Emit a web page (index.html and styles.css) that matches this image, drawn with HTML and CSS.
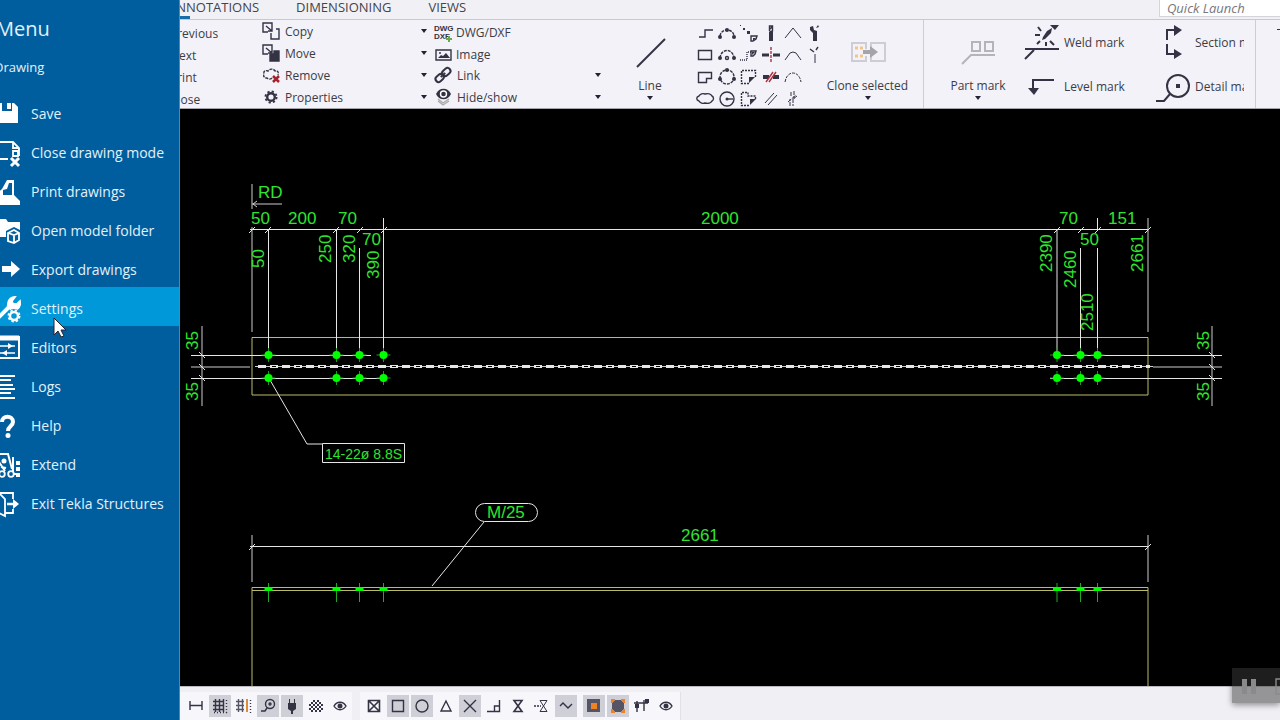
FILE: index.html
```html
<!DOCTYPE html>
<html lang="en">
<head>
    <meta charset="UTF-8">
    <title>Tekla Structures</title>
    <link rel="stylesheet" href="styles.css">
</head>
<body>

<!-- file menu -->
<aside class="menu">
    <h1>Menu</h1>
    <h2>Drawing</h2>
    <ul>
        <li><button><svg class="mi" viewBox="0 0 24 24"><path fill="#fff" stroke="none" d="M0 1h6v8h10V1h2l4 4v16H0zM11 1h4v6h-4z"/></svg>Save</button></li>
        <li><button><svg class="mi" viewBox="0 0 24 24"><path d="M0 18h12M0 1h17l6 6v8M17 1v6h6"/><path d="M17 10h5v5h-5z"/><path stroke-width="3" d="M15 17l8 8M23 17l-8 8"/></svg>Close drawing mode</button></li>
        <li><button><svg class="mi" viewBox="0 0 24 24"><path fill="#fff" stroke="none" fill-rule="evenodd" d="M0 14l6-5 5-9h7v15l6 6v4H0zM13 3h3v12H7v-5l4-1z"/></svg>Print drawings</button></li>
        <li><button><svg class="mi" viewBox="0 0 24 24"><path fill="#fff" stroke="none" d="M0 0h10l2 3h12v8l-6-3-8 4v6H0z"/><path d="M18 11l5 3v7l-5 3-6-2v-8zM12 14l6 2 5-2M18 16v7"/></svg>Open model folder</button></li>
        <li><button><svg class="mi" viewBox="0 0 24 24"><path fill="#fff" stroke="none" d="M6 8h9V3l9 8-9 8v-5H6z"/></svg>Export drawings</button></li>
        <li class="active"><button><svg class="mi" viewBox="0 0 24 24"><path stroke-width="4" d="M1 22L15 8"/><path fill="#fff" d="M19 0l-3 4 1 3 4 0 3-3c1 5-2 9-6 9-5 0-7-4-6-7 1-4 4-6 7-6z"/><circle cx="18" cy="19" r="7" fill="#0098d8" stroke="none"/><circle cx="18" cy="19" r="4" stroke-width="2.5"/><circle cx="18" cy="19" r="5.7" stroke-width="1.6" stroke-dasharray="2.4 2.08"/></svg>Settings</button></li>
        <li><button><svg class="mi" viewBox="0 0 24 24"><path d="M0 1h23v21H0" stroke-width="2"/><path d="M0 2h23" stroke-width="5"/><path d="M0 10h19M0 17h19" stroke-width="1.6"/><path d="M12 7l5 3-5 3zM11 14l-5 3 5 3z" fill="#fff" stroke="none"/></svg>Editors</button></li>
        <li><button><svg class="mi" viewBox="0 0 24 24"><path d="M0 1h19M0 5h15M0 10h17M0 14h19M0 18h15M0 23h19"/></svg>Logs</button></li>
        <li><button><svg class="mi" viewBox="0 0 24 24"><path stroke-width="4" d="M6 8c0-7 11-7 11 0 0 4-5 4-5 9"/><circle cx="12" cy="21.500" r="2.500" fill="#fff" stroke="none"/></svg>Help</button></li>
        <li><button><svg class="mi" viewBox="0 0 24 24"><path d="M3 1h9l4 15M3 1v8l6 9M17 4v17h3M5 14l5 1" stroke-width="2"/><circle cx="8" cy="8" r="2.500" fill="#fff" stroke="none"/><circle cx="6" cy="21" r="2.800"/><circle cx="15" cy="21" r="2.800" fill="#005e9e"/><path d="M20 8h4v4h-4zM20 14h4v4h-4zM20 20h4v4h-4z" fill="#fff" stroke="none"/></svg>Extend</button></li>
        <li><button><svg class="mi" viewBox="0 0 24 24"><path d="M0 1h17v6M17 17v4H9M9 7v17l-6-3V1z"/><path d="M11 12h8" stroke-width="2.500"/><path d="M17 7l6 5-6 5z" fill="#fff" stroke="none"/></svg>Exit Tekla Structures</button></li>
    </ul>
</aside>

<main>
    <header class="tabs">
        <nav>
            <a class="tab tab-first" href="#">ANNOTATIONS</a>
            <a class="tab" href="#">DIMENSIONING</a>
            <a class="tab" href="#">VIEWS</a>
        </nav>
        <input class="quick" type="text" placeholder="Quick Launch" aria-label="Quick Launch">
    </header>

    <!-- ribbon -->
    <section class="ribbon">
        <div class="group nav-group">
            <button>Previous</button>
            <button>Next</button>
            <button>Print</button>
            <button>Close</button>
        </div>

        <div class="group edit-group">
            <button class="tool"><svg class="ti" viewBox="0 0 18 18"><path d="M6 10H1V1h9v5M9 11v6h8V7h-3M4 4l6 5M10 5v4H6"/></svg>Copy<i class="caret"></i></button>
            <button class="tool"><svg class="ti" viewBox="0 0 18 18"><path d="M6 10H1V1h9v5M4 4l6 5M10 5v4H6"/><path fill="#334" d="M8 10h4V7h5v10H8z"/></svg>Move<i class="caret"></i></button>
            <button class="tool"><svg class="ti" viewBox="0 0 18 18"><path d="M10 12c-2 2-4 1-5 0-3 0-4-2-3-4-1-3 2-4 4-3 2-3 6-2 7 0 3-1 4 2 3 4" stroke-dasharray="3 1"/><path stroke="#a8202a" stroke-width="2.500" d="M11 10l6 6M17 10l-6 6"/></svg>Remove<i class="caret"></i></button>
            <button class="tool"><svg class="ti" viewBox="0 0 18 18"><circle cx="9" cy="9" r="3.800" stroke-width="2.400"/><circle cx="9" cy="9" r="5.600" stroke-width="1.800" stroke-dasharray="2.200 2.200"/></svg>Properties<i class="caret"></i></button>
        </div>

        <div class="group insert-group">
            <button class="tool plain"><svg class="ti" viewBox="0 0 18 18"><text class="dwg" x="0" y="7">DWG</text><text class="dwg" x="0" y="15">DXF</text><path stroke="#6aa84f" stroke-width="2" d="M15 12v6M12 15h6"/></svg>DWG/DXF</button>
            <button class="tool plain"><svg class="ti" viewBox="0 0 18 18"><path d="M2 4h15v10H2z"/><path fill="#334" stroke="none" d="M4 12l3-3 2 1 3-3 4 5z"/><circle cx="6" cy="7" r="1" fill="#334" stroke="none"/></svg>Image</button>
            <button class="tool"><svg class="ti" viewBox="0 0 18 18"><g transform="rotate(-42 9 9)" stroke-width="2"><rect x="0" y="6" width="9" height="6" rx="3"/><rect x="9" y="6" width="9" height="6" rx="3"/><path d="M6 9h6"/></g></svg>Link<i class="caret"></i></button>
            <button class="tool"><svg class="ti" viewBox="0 0 18 18"><path d="M4 11l5 4 6-4M4 13l5 4 6-4" stroke="#aaa"/><path fill="#334" stroke="none" d="M2 6c3-7 12-7 15 0-3 7-12 7-15 0z"/><circle cx="9.500" cy="6" r="3" stroke="#fff"/></svg>Hide/show<i class="caret"></i></button>
        </div>

        <button class="big"><svg class="bi" viewBox="0 0 44 40"><path stroke-width="2" d="M9 35L37 7"/></svg>Line<i class="caret"></i></button>

        <!-- sketching and part symbols -->
        <div class="sketch">
            <button aria-label="Polyline"><svg viewBox="0 0 22 22"><path d="M5 15h6V8h8"/></svg></button>
            <button aria-label="Arc by three points"><svg viewBox="0 0 22 22"><path stroke-dasharray="3 1" d="M4 14C5 6 17 6 18 14"/><g class="dot"><circle cx="4" cy="15" r="2"/><circle cx="18" cy="15" r="2"/><circle cx="11" cy="8" r="2"/></g></svg></button>
            <button aria-label="Associative symbol"><svg viewBox="0 0 22 22"><path class="dot" d="M2 3h1v1H2zM5 6h2v2H5zM9 9h3v3H9z"/><path d="M13 14h6l-1 3-3 2h-2z"/><path class="dot" d="M15 16h3l-3 3z"/></svg></button>
            <button aria-label="Column"><svg viewBox="0 0 22 22"><path class="dot" d="M9 10l4-1v10H9z"/><path d="M9.500 9V4h3v5l-3 1M10 7l2-2"/></svg></button>
            <button aria-label="Open angle"><svg viewBox="0 0 22 22"><path class="thin" d="M3 16l8-10 8 10"/></svg></button>
            <button aria-label="Bent column"><svg viewBox="0 0 22 22"><path class="dot" d="M9 19v-8L6 8V5l3-1 1 4 3 1v10zM12 6l2-3 1 2z"/></svg></button>

            <button aria-label="Rectangle"><svg viewBox="0 0 22 22"><path d="M4.500 6.500h13v9h-13z"/></svg></button>
            <button aria-label="Arc by centre"><svg viewBox="0 0 22 22"><path stroke-dasharray="3 1" d="M4 14C5 4 17 4 18 14"/><circle cx="11" cy="14" r="1.500"/><g class="dot"><circle cx="4" cy="14" r="2"/><circle cx="18" cy="14" r="2"/></g></svg></button>
            <button aria-label="Polyline symbol"><svg viewBox="0 0 22 22"><path stroke-dasharray="1 1" d="M2 16h7V8h4"/><path d="M13 7h5l-1 3-2 2h-2z"/><path class="dot" d="M14 8h3l-3 3z"/></svg></button>
            <button aria-label="Horizontal cut"><svg viewBox="0 0 22 22"><path stroke-width="3" d="M2 11h7M13 11h7"/><path stroke="#b03040" stroke-dasharray="3 1" d="M11 3v16"/></svg></button>
            <button aria-label="Rounded angle"><svg viewBox="0 0 22 22"><path class="thin" d="M3 16l5-7q3-2 6 0l5 7"/></svg></button>
            <button aria-label="Split line"><svg viewBox="0 0 22 22"><path class="thin" d="M11 19v-9"/><path d="M6 5l4 3M12 6l2-3"/></svg></button>

            <button aria-label="Polygon"><svg viewBox="0 0 22 22"><path d="M4.500 6.500h13v6h-5v4h-8z"/></svg></button>
            <button aria-label="Circle by points"><svg viewBox="0 0 22 22"><circle cx="11" cy="11" r="7" stroke-dasharray="3 1"/><g class="dot"><circle cx="11" cy="4" r="2"/><circle cx="4" cy="13" r="2"/><circle cx="18" cy="13" r="2"/></g></svg></button>
            <button aria-label="Rectangle symbol"><svg viewBox="0 0 22 22"><path stroke-dasharray="2 1" d="M17.500 11V4.500h-14v13H11"/><path class="dot" d="M11 11h6l-6 6z"/></svg></button>
            <button aria-label="Cut part"><svg viewBox="0 0 22 22"><path stroke-width="4" d="M3 11h6M13 11h6"/><path stroke="#b03040" d="M6 16l7-10M9 16l7-10"/></svg></button>
            <button aria-label="Curve"><svg viewBox="0 0 22 22"><path class="thin" stroke-dasharray="3 1" d="M3 16C5 4 17 4 19 16"/></svg></button>
            <span></span>

            <button aria-label="Cloud"><svg viewBox="0 0 22 22"><path d="M5 8c1-2 4-3 6-2 3-1 6 0 7 2 2 1 2 4 0 5-1 2-4 3-7 2-2 1-5 0-6-2-3-1-3-4 0-5z"/></svg></button>
            <button aria-label="Circle"><svg viewBox="0 0 22 22"><circle cx="11" cy="11" r="7"/><path d="M11 11h6"/><circle class="dot" cx="11" cy="11" r="1.500"/></svg></button>
            <button aria-label="Polygon symbol"><svg viewBox="0 0 22 22"><path stroke-dasharray="2 1" d="M17.500 11V8H10V4.500H3.500v13H11"/><path class="dot" d="M12 11h6l-6 6z"/></svg></button>
            <button aria-label="Parallel"><svg viewBox="0 0 22 22"><path class="thin" d="M5 15l9-10M8 17l9-10"/></svg></button>
            <button aria-label="Break"><svg viewBox="0 0 22 22"><path class="thin" stroke-dasharray="4 1" d="M8 18V11M12 3v8M9 4v4M15 8l-4 3v7M6 14l8-7"/></svg></button>
            <span></span>
        </div>

        <button class="big clone"><svg class="bi" viewBox="0 0 44 40"><path stroke="#cdcdd4" stroke-width="2" d="M20 17v-6H6v18h14v-5M25 17v-6h14v18H25v-5"/><path stroke="#f2c48c" stroke-width="3" stroke-dasharray="3 2" d="M9 16h9M9 24h9"/><path fill="#a4a4aa" stroke="none" d="M17 18h7v-4l8 6-8 6v-4h-7z"/></svg>Clone selected<i class="caret"></i></button>

        <button class="big part"><svg class="bi" viewBox="0 0 44 40"><path stroke="#b4b4ba" stroke-width="2" d="M16 10h8v9h-8zM29 10h8v9h-8zM6 32l9-9h24"/></svg>Part mark<i class="caret"></i></button>

        <div class="marks">
            <button class="mark"><svg viewBox="0 0 36 36"><path stroke-width="2" d="M1 25h34M10 26L1 35M14 3l3 4M11 11h5M13 20l3-3M22 18v4M26 17l4 4"/><path fill="#334" stroke="none" d="M19 13l4-6 5-3-1 5-6 6-3 1zM26 1h9l-4 5z"/></svg>Weld mark</button>
            <button class="mark"><svg viewBox="0 0 36 36"><path stroke-width="2" d="M30 12H9v9"/><path fill="#334" stroke="none" d="M4 20h11l-5 7z"/></svg>Level mark</button>
        </div>
        <div class="marks section-marks">
            <button class="mark"><svg viewBox="0 0 36 36"><path stroke-width="2" d="M11 16V6h8M11 20v10h8"/><path fill="#334" stroke="none" d="M18 1l8 5-8 6zM18 25l8 5-8 5z"/></svg>Section mark</button>
            <button class="mark"><svg viewBox="0 0 36 36"><circle cx="22" cy="18" r="11" stroke-width="2"/><path stroke-width="2" d="M14 26l-6 7H0"/><path class="dot" d="M20 16h4v4h-4z"/></svg>Detail mark</button>
        </div>
        <i class="more"></i>
    </section>

    <!-- drawing area -->
    <svg class="drawing" viewBox="180 109 1100 577" preserveAspectRatio="xMidYMin meet">
        <defs>
            <g id="bolt"><path stroke="#1c9c1c" d="M0-7v14M-7 0h14"/><circle r="4"/></g>
            <g id="side"><path stroke="#1faa1f" d="M0-6v19"/><path d="M-4-2h8v4h-8z"/></g>
            <path id="tick" d="M-3 3L3-3"/>
            <path id="tick2" d="M-3-3L3 3"/>
        </defs>

        <g class="beam">
            <path d="M252 337.500h896v57.500h-896z"/>
            <path d="M252 686v-98.500h896v98.500M252 590.500h896"/>
        </g>

        <!-- dimension lines -->
        <g class="dims">
            <path d="M250 229.500h899M250 546.500h899"/>
            <path d="M268.500 229v126M336.500 229v126M359.500 248v107M383.500 218v137M1057 229v126M1080.500 248v107M1097.500 218v12M1097.500 248v107"/>
            <path d="M191 355.500h180M191 378.500h192M1057 355.500h165M1050 378.500h172"/>
            <path class="grey" d="M252 184v25M252 227v105M1148 218v114M252 535v47M1148 535v47M191 367h59M1153 367h69M202 326v80M1212 326v80M252 204h30M257 201l-4 3 4 3"/>
            <path class="grey" d="M255 366.500h898"/>
            <path stroke-width="3" stroke-dasharray="8 4" d="M258 366.500h892"/>
            <path stroke="#000" stroke-dasharray="4 20" d="M272 366.500h876"/>
            <path d="M270 380l37 64h15M322.500 443.500h82v19h-82zM484 522l-52 64"/>
            <rect x="475.500" y="503.500" width="62" height="18" rx="9"/>
            <use href="#tick" x="252" y="230"/><use href="#tick" x="268" y="230"/><use href="#tick" x="336" y="230"/><use href="#tick" x="360" y="230"/><use href="#tick" x="384" y="230"/>
            <use href="#tick" x="1057" y="230"/><use href="#tick" x="1081" y="230"/><use href="#tick" x="1098" y="230"/><use href="#tick" x="1148" y="230"/>
            <use href="#tick" x="252" y="547"/><use href="#tick" x="1148" y="547"/>
            <use href="#tick2" x="202" y="355"/><use href="#tick2" x="202" y="367"/><use href="#tick2" x="202" y="378"/>
            <use href="#tick2" x="1212" y="355"/><use href="#tick2" x="1212" y="367"/><use href="#tick2" x="1212" y="378"/>
        </g>

        <!-- bolts -->
        <g class="bolts">
            <use href="#bolt" x="268.500" y="355"/><use href="#bolt" x="336.500" y="355"/><use href="#bolt" x="359.500" y="355"/><use href="#bolt" x="383.500" y="355"/>
            <use href="#bolt" x="268.500" y="378"/><use href="#bolt" x="336.500" y="378"/><use href="#bolt" x="359.500" y="378"/><use href="#bolt" x="383.500" y="378"/>
            <use href="#bolt" x="1057" y="355"/><use href="#bolt" x="1080.500" y="355"/><use href="#bolt" x="1097.500" y="355"/>
            <use href="#bolt" x="1057" y="378"/><use href="#bolt" x="1080.500" y="378"/><use href="#bolt" x="1097.500" y="378"/>
            <use href="#side" x="268.500" y="589"/><use href="#side" x="336.500" y="589"/><use href="#side" x="359.500" y="589"/><use href="#side" x="383.500" y="589"/>
            <use href="#side" x="1057" y="589"/><use href="#side" x="1080.500" y="589"/><use href="#side" x="1097.500" y="589"/>
        </g>

        <g class="values">
            <text x="258" y="198">RD</text>
            <text x="251" y="224">50</text>
            <text x="288" y="224">200</text>
            <text x="338" y="224">70</text>
            <text x="362" y="245">70</text>
            <text x="701" y="224">2000</text>
            <text x="1059" y="224">70</text>
            <text x="1080" y="245">50</text>
            <text x="1108" y="224">151</text>
            <text x="681" y="541">2661</text>
            <text x="487" y="518">M/25</text>
            <text class="note" x="325" y="459">14-22ø 8.8S</text>
            <text transform="translate(264 268) rotate(-90)">50</text>
            <text transform="translate(331 263) rotate(-90)">250</text>
            <text transform="translate(355 263) rotate(-90)">320</text>
            <text transform="translate(379 279) rotate(-90)">390</text>
            <text transform="translate(1052 272) rotate(-90)">2390</text>
            <text transform="translate(1076 288) rotate(-90)">2460</text>
            <text transform="translate(1093 331) rotate(-90)">2510</text>
            <text transform="translate(1143 272) rotate(-90)">2661</text>
            <text transform="translate(198 350) rotate(-90)">35</text>
            <text transform="translate(198 401) rotate(-90)">35</text>
            <text transform="translate(1209 350) rotate(-90)">35</text>
            <text transform="translate(1209 401) rotate(-90)">35</text>
        </g>
    </svg>

    <!-- selection and snap switches -->
    <footer class="status">
        <div class="switches">
            <button aria-label="Select dimensions"><svg viewBox="0 0 22 22"><path d="M5 6v9M17 6v9M5 10.500h12"/></svg></button>
            <button class="on" aria-label="Select grids"><svg viewBox="0 0 22 22"><path d="M4 6.500h11M4 10.500h11M4 14.500h11M6.500 4v13M10.500 4v13M14.500 4v13"/><path stroke-dasharray="1 2" d="M17.500 5v13M5 17.500h13"/></svg></button>
            <button aria-label="Select grid lines"><svg viewBox="0 0 22 22"><path stroke="#556" d="M3 6.500h8M3 10.500h8M3 14.500h8M5.500 4v13M9.500 4v13"/><path stroke="#e08a3a" stroke-width="2" d="M14 4v13"/><path stroke-dasharray="1 2" d="M17.500 5v13"/></svg></button>
            <button class="on" aria-label="Select detail marks"><svg viewBox="0 0 22 22"><circle cx="13" cy="9" r="4.500"/><circle cx="13" cy="9" r="1"/><path d="M10 13l-2 3H4"/></svg></button>
            <button class="on" aria-label="Select plugins"><svg viewBox="0 0 22 22"><path class="dot" d="M7 8h8v6l-3 2v3h-2v-3l-3-2zM8 4h1v4H8zM13 4h1v4h-1z"/></svg></button>
            <button aria-label="Select surfaces"><svg viewBox="0 0 22 22"><g stroke-width="2" stroke-dasharray="2 2"><path d="M8 6h6M6 8h11M4 10h14M6 12h11M4 14h14M6 16h11"/></g></svg></button>
            <button aria-label="Selection visibility"><svg viewBox="0 0 22 22"><path d="M5 11c3-5 9-5 12 0-3 5-9 5-12 0z"/><circle class="dot" cx="11" cy="11" r="2.500"/></svg></button>
        </div>
        <div class="switches snaps">
            <button aria-label="Snap to reference points"><svg viewBox="0 0 22 22"><path d="M5.500 5.500h11v11h-11zM6 6l10 10M16 6L6 16" stroke-width="1.600"/></svg></button>
            <button class="on" aria-label="Snap to end points"><svg viewBox="0 0 22 22"><path d="M5.500 5.500h11v11h-11z"/></svg></button>
            <button class="on" aria-label="Snap to centre points"><svg viewBox="0 0 22 22"><circle cx="11" cy="11" r="6"/></svg></button>
            <button aria-label="Snap to midpoints"><svg viewBox="0 0 22 22"><path d="M11 6l5 10H6z"/></svg></button>
            <button class="on" aria-label="Snap to intersections"><svg viewBox="0 0 22 22"><path d="M5 5l12 12M17 5L5 17"/></svg></button>
            <button aria-label="Snap to perpendicular points"><svg viewBox="0 0 22 22"><path d="M4 16.500h12.500V5M11.500 16v-5H16"/></svg></button>
            <button aria-label="Snap to nearest points"><svg viewBox="0 0 22 22"><path d="M7 5.500h8L7 16.500h8z" stroke-width="1.600"/></svg></button>
            <button aria-label="Snap to line extensions"><svg viewBox="0 0 22 22"><path class="thin" d="M9 5.500h7l-7 11h7z"/><path stroke-dasharray="2 1" d="M3 11h7"/></svg></button>
            <button class="on" aria-label="Snap to any position"><svg viewBox="0 0 22 22"><path d="M5 11l3-3 5 5 4-4"/></svg></button>
            <button class="on apart" aria-label="Select in model"><svg viewBox="0 0 22 22"><path fill="#556" stroke="none" d="M4 4h13v13H4z"/><path fill="#f08224" stroke="none" d="M8 8h6v6H8z"/></svg></button>
            <button class="on" aria-label="Select in assemblies"><svg viewBox="0 0 22 22"><path fill="#556" stroke="none" d="M8 5h6l3 3v6l-3 3H8l-3-3V8z"/><path fill="#f08224" stroke="none" d="M4 4h4v1L5 8H4zM18 4h-4v1l3 3h1zM4 18h4v-1l-3-3H4zM18 18h-4v-1l3-3h1z"/></svg></button>
            <button aria-label="Orthogonal snap"><svg viewBox="0 0 22 22"><path d="M6 6v11M13 5v11M3 8h14"/><path class="dot" d="M4 9h4v4H4zM14 4h4v4h-4z"/></svg></button>
            <button aria-label="Snap visibility"><svg viewBox="0 0 22 22"><path d="M5 11c3-5 9-5 12 0-3 5-9 5-12 0z"/><circle class="dot" cx="11" cy="11" r="2.500"/></svg></button>
        </div>
    </footer>
</main>

<!-- recorder controls and mouse pointer -->
<button class="recorder" aria-label="Pause recording"><svg viewBox="0 0 48 36"><path class="bars" d="M10 11h5v15h-5zM19 11h5v15h-5z"/><path class="stop" d="M49 11h-5v15h5"/></svg></button>
<svg class="pointer" viewBox="0 0 14 22"><path d="M1 1v17l4-4 3 6 3-1-3-6h5z"/></svg>

</body>
</html>
```
FILE: styles.css
```css
* {
    box-sizing: border-box;
}

body {
    display: flex;
    height: 100vh;
    margin: 0;
    overflow: hidden;
    background: #000;
    color: #3c3c44;
    font-family: "Open Sans", "Noto Sans", sans-serif;
    font-size: 12px;
}

button {
    margin: 0;
    padding: 0;
    border: 0;
    background: none;
    color: inherit;
    font: inherit;
    text-align: left;
    white-space: nowrap;
}

svg {
    display: block;
    flex: none;
    fill: none;
    stroke: #334;
    stroke-width: 1.4;
}

.dot {
    fill: #334;
    stroke: none;
}

.thin {
    stroke-width: 1;
}

/* menu */
.menu {
    flex: none;
    width: 180px;
    padding-top: 16px;
    overflow: hidden;
    background: #005e9e;
    border-right: 1px solid #5b83a8;
    color: #e2f1fb;
}

.menu h1 {
    margin: 0 0 0 -4px;
    font-size: 20px;
    line-height: 26px;
    font-weight: normal;
}

.menu h2 {
    margin: 15px 0 0 -6px;
    font-size: 13px;
    line-height: 20px;
    font-weight: normal;
}

.menu ul {
    margin: 15px 0 0;
    padding: 0;
    list-style: none;
}

.menu li {
    height: 39px;
}

.menu li.active {
    background: #0098d8;
}

.menu li button {
    display: flex;
    align-items: center;
    gap: 11px;
    width: 100%;
    height: 39px;
    margin-left: -4px;
    padding-top: 4px;
    font-size: 14px;
}

.mi {
    width: 24px;
    height: 24px;
    stroke: #fff;
    stroke-width: 1.8;
    overflow: visible;
}

/* right side */
main {
    display: flex;
    flex: 1;
    flex-direction: column;
    min-width: 0;
    overflow: hidden;
}

.tabs {
    display: flex;
    justify-content: space-between;
    height: 20px;
    background: #f1f1f5;
    border-bottom: 1px solid #c8c8cd;
}

.tabs nav {
    display: flex;
    gap: 37px;
    margin-left: -12px;
}

.tab {
    height: 19px;
    color: #44444c;
    font-size: 13px;
    line-height: 14px;
    text-decoration: none;
}

.tab-first {
    border-bottom: 3px solid #1a6ea8;
    border-image: linear-gradient(to right, #1a6ea8 24px, transparent 24px) 3;
}

.quick {
    width: 121px;
    height: 17px;
    padding: 0 7px;
    border: 1px solid #d4d4da;
    border-width: 0 0 1px 1px;
    background: #fff;
    font: italic 13px "Open Sans", "Noto Sans", sans-serif;
}

.quick::placeholder {
    color: #77777d;
    opacity: 1;
}

.ribbon {
    display: flex;
    height: 89px;
    overflow: hidden;
    background: #f3f2f8;
    border-bottom: 1px solid #a5a5ab;
}

.group {
    display: flex;
    flex: none;
    flex-direction: column;
}

.group button {
    flex: none;
    height: 22px;
}

.nav-group {
    width: 80px;
    padding-top: 2px;
    overflow: hidden;
}

.nav-group button {
    margin-left: -10px;
}

.edit-group {
    width: 170px;
    padding: 0 3px 0 2px;
}

.insert-group {
    width: 176px;
    padding: 0 5px 0 4px;
}

.tool {
    display: flex;
    align-items: center;
    gap: 5px;
}

.tool.plain {
    gap: 4px;
    padding-top: 3px;
}

.ti {
    width: 18px;
    height: 18px;
    overflow: visible;
}

.dwg {
    fill: #334;
    stroke: none;
    font: bold 8px "Liberation Sans", sans-serif;
}

.caret {
    border: 3px solid transparent;
    border-top: 4px solid #223;
    border-bottom: 0;
}

.tool .caret {
    margin-left: auto;
}

.big {
    display: flex;
    flex: none;
    flex-direction: column;
    align-items: center;
    width: 88px;
    padding-top: 12px;
    line-height: 28px;
}

.big .caret {
    margin-top: -4px;
}

.bi {
    width: 44px;
    height: 40px;
}

.clone {
    width: 98px;
    padding-right: 14px;
    border-right: 1px solid #cdcdd3;
}

.part {
    width: 80px;
    margin: 0 6px 0 14px;
}

.sketch {
    display: grid;
    flex: none;
    grid-template-columns: repeat(6, 22px);
    grid-auto-rows: 22px;
    padding-top: 2px;
}

.sketch svg {
    width: 22px;
    height: 22px;
}

.marks {
    display: flex;
    flex: none;
    flex-direction: column;
    width: 132px;
}

.mark {
    display: flex;
    align-items: center;
    gap: 4px;
    height: 44px;
}

.mark svg {
    width: 36px;
    height: 36px;
}

.section-marks {
    width: 100px;
    padding-right: 11px;
    border-right: 1px solid #cdcdd3;
}

.section-marks .mark {
    gap: 3px;
    overflow: hidden;
}

.more {
    width: 3px;
    height: 1px;
    margin: 9px 0 0 auto;
    background: #334;
}

/* drawing */
.drawing {
    flex: 1;
    width: 100%;
    min-height: 0;
    background: #000;
}

.beam {
    stroke: #bcbc68;
    stroke-width: 1;
}

.dims {
    stroke: #e6e6e6;
    stroke-width: 1;
}

.grey {
    stroke: #ccc;
}

.bolts {
    fill: #0f0;
    stroke: none;
    stroke-width: 1;
}

.values {
    fill: #2fe42f;
    stroke: none;
    font: 17px "Liberation Sans", Arial, sans-serif;
}

.note {
    font-size: 14px;
}

/* bottom bar */
.status {
    display: flex;
    gap: 8px;
    height: 34px;
    padding-top: 5px;
    background: #efeff4;
    border-top: 1px solid #bcbcc0;
}

.switches {
    display: flex;
    align-items: center;
    gap: 2px;
    height: 28px;
    padding: 0 1px 0 5px;
    background: #f7f7fb;
}

.snaps {
    padding: 0 3px;
    border-right: 1px solid #e0e0e6;
}

.switches button {
    width: 22px;
    height: 22px;
}

.switches .on {
    background: #cfcfd7;
}

.switches .apart {
    margin-left: 4px;
}

/* things floating over the window */
.recorder {
    position: absolute;
    right: 0;
    bottom: 17px;
    width: 48px;
    height: 35px;
    background: rgba(60, 60, 60, 0.5);
    box-shadow: 0 2px 6px rgba(0, 0, 0, 0.4);
    overflow: hidden;
}

.recorder .bars {
    fill: #8a8a8a;
    stroke: none;
}

.recorder .stop {
    stroke: #8a8a8a;
}

.pointer {
    position: absolute;
    left: 53px;
    top: 317px;
    width: 14px;
    height: 22px;
    fill: #fff;
    stroke: #223;
    stroke-width: 1;
}
```
